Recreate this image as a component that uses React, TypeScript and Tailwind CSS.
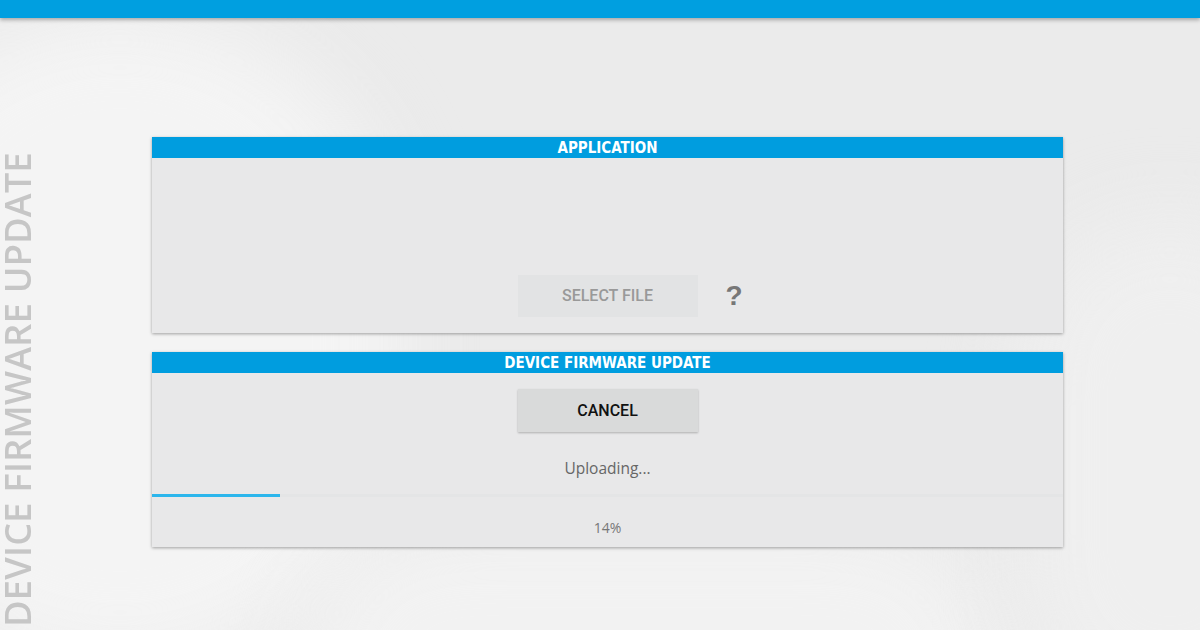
export default function App() {
  const progress = 14

  return (
    <div className="relative w-[1200px] h-[630px] overflow-hidden bg-[#ebebeb] font-['Open_Sans',sans-serif]">
      {/* faint backdrop shapes */}
      <div className="absolute -left-[160px] top-[10px] w-[560px] h-[660px] rounded-full bg-[#f4f4f4] blur-2xl" />
      <div className="absolute left-[300px] top-[520px] w-[700px] h-[300px] rounded-full bg-[#f2f2f2] blur-2xl" />
      <div className="absolute left-[1020px] top-[220px] w-[300px] h-[500px] rounded-full bg-[#efefef] blur-2xl" />

      <div className="relative flex flex-col h-full">
        <div className="h-[18px] shrink-0 bg-[#009fe0] shadow-[0_2px_4px_rgba(0,0,0,0.3)]" />

        <div className="flex flex-1 min-h-0">
          <div className="w-[36px] shrink-0 flex items-end justify-center pb-[3px]">
            <span className="[writing-mode:vertical-rl] rotate-180 text-[36px] leading-[36px] font-semibold tracking-[0.3px] text-[#c6c6c6] whitespace-nowrap">
              DEVICE FIRMWARE UPDATE
            </span>
          </div>

          <div className="pl-[116px] pt-[119px] flex flex-col gap-[19px]">
            {/* application panel */}
            <div className="w-[911px] bg-[#e8e8e9] shadow-[0_1px_3px_rgba(0,0,0,0.35)]">
              <div className="h-[21px] pt-[1px] bg-[#009ddf] flex items-center justify-center text-white font-bold text-[15px] font-['DejaVu_Sans_Condensed','DejaVu_Sans',sans-serif]">
                APPLICATION
              </div>
              <div className="h-[175px] flex flex-col justify-end pb-[16px]">
                <div className="grid grid-cols-[1fr_auto_1fr] items-center">
                  <div />
                  <button className="w-[180px] h-[42px] bg-[#e2e3e4] text-[#999999] text-[16px] font-medium font-['Roboto',sans-serif]">
                    SELECT FILE
                  </button>
                  <span className="pl-[28px] text-[28px] leading-none font-bold text-[#777777] font-['Liberation_Sans',sans-serif]">?</span>
                </div>
              </div>
            </div>

            {/* dfu panel */}
            <div className="w-[911px] bg-[#e8e8e9] shadow-[0_1px_3px_rgba(0,0,0,0.35)]">
              <div className="h-[21px] pt-[1px] bg-[#009ddf] flex items-center justify-center text-white font-bold text-[15px] font-['DejaVu_Sans_Condensed','DejaVu_Sans',sans-serif]">
                DEVICE FIRMWARE UPDATE
              </div>
              <div className="h-[174px] flex flex-col items-center pt-[16px]">
                <button className="w-[180px] h-[43px] bg-[#d9dada] text-[#111111] text-[16px] font-medium font-['Roboto',sans-serif] shadow-[0_1px_2px_rgba(0,0,0,0.25)]">
                  CANCEL
                </button>
                <div className="mt-[25px] text-[15.5px] text-[#666666]">Uploading...</div>
                <div className="mt-[14px] w-full h-[3px] bg-[#e4e5e6]">
                  <div className="h-full bg-[#2cb6ec]" style={{ width: `${progress}%` }} />
                </div>
                <div className="mt-[20px] text-[14px] text-[#777777]">{progress}%</div>
              </div>
            </div>
          </div>
        </div>
      </div>
    </div>
  )
}
